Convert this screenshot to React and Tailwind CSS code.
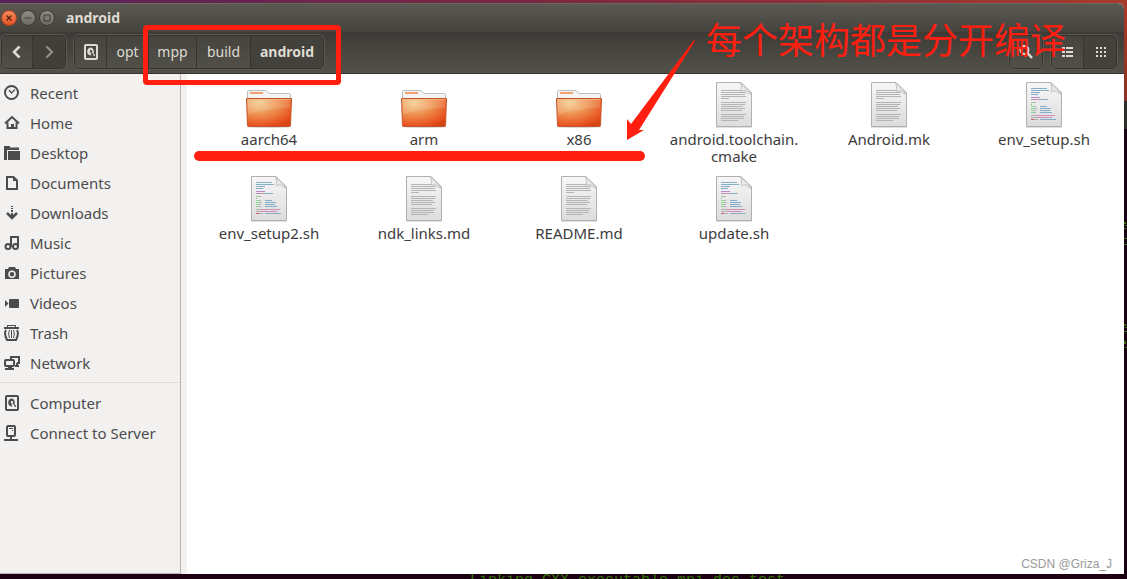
const DISK = (
  <>
    <rect x="2" y="1" width="12" height="14" rx="1" fill="none" stroke="currentColor" strokeWidth="2" />
    <path
      fillRule="evenodd"
      d="M8 3.500a4 4 0 00-1 7.800l1.500.2L7.500 9 9 8.500l2 3.500h1v-1L10.500 9A4 4 0 008 3.500zM8 6a1.200 1.200 0 110 2.400A1.200 1.200 0 018 6z"
    />
  </>
);

const ICONS = {
  recent: (
    <>
      <circle cx="7.5" cy="7.5" r="6.5" fill="none" stroke="currentColor" strokeWidth="2" />
      <path d="M5 5l2.5 3L11 4.5" fill="none" stroke="currentColor" strokeWidth="1.2" />
    </>
  ),
  home: (
    <>
      <path d="M1 8.500L8 2l7 6.500" fill="none" stroke="currentColor" strokeWidth="2" />
      <path d="M3.500 7.500V13h9V7.500" fill="none" stroke="currentColor" strokeWidth="2" />
      <path d="M7 9h3v5H7z" />
    </>
  ),
  desktop: (
    <>
      <path d="M0 1h6v1.500h9V5H3v10H0z" />
      <path d="M4 6h12v9H4z" />
      <path d="M1.500 4.500V15" stroke="currentColor" strokeWidth="3" />
    </>
  ),
  documents: (
    <>
      <path d="M3 2h6.500L13 5.500V14H3z" fill="none" stroke="currentColor" strokeWidth="2" />
      <path d="M9 1l5 5H9z" />
    </>
  ),
  downloads: (
    <>
      <path d="M7 1h2v1H7zM7 3h2v1H7zM7 5h2v2H7zM7 8h2v4H7z" />
      <path d="M3 8l5 5 5-5" fill="none" stroke="currentColor" strokeWidth="2.500" />
    </>
  ),
  music: (
    <>
      <path d="M6 1h9v11h-2V3H8v9H6z" />
      <circle cx="4" cy="11.500" r="2.500" fill="none" stroke="currentColor" strokeWidth="2" />
      <circle cx="11.500" cy="11.500" r="2.500" fill="none" stroke="currentColor" strokeWidth="2" />
    </>
  ),
  pictures: (
    <path
      fillRule="evenodd"
      d="M5 2h6l1 2h3v10H1V4h3zM8 5.500a3.800 3.800 0 100 7.600 3.800 3.800 0 000-7.600zM8 7a2.300 2.300 0 110 4.600A2.300 2.300 0 018 7z"
    />
  ),
  videos: (
    <>
      <rect x="5" y="4" width="10" height="9" rx="1" />
      <path d="M1 5l3.500 3.500L1 12z" />
    </>
  ),
  trash: (
    <>
      <path d="M3 0h9v2h3v2H0V2h3z" />
      <path d="M2 5C0 8 1.500 12 3 15h9c1.500-3 3-7 1-10" fill="none" stroke="currentColor" strokeWidth="2" />
      <path d="M5.500 5c-1 3-1 5 0 8M7.500 5v8M9.500 5c1 3 1 5 0 8" fill="none" stroke="currentColor" />
      <path d="M4 1.500h7" stroke="#f2f1f0" />
    </>
  ),
  network: (
    <>
      <path d="M7 4V2h8v6h-2" fill="none" stroke="currentColor" strokeWidth="2" />
      <rect x="1" y="5" width="9" height="6" rx="1" fill="none" stroke="currentColor" strokeWidth="2" />
      <path d="M4 12h4v1h2v2H1v-2h3zM12 8h2v2h1v2h-4v-2h1z" />
    </>
  ),
  computer: DISK,
  server: (
    <>
      <rect x="3" y="1" width="8" height="10" rx="1" fill="none" stroke="currentColor" strokeWidth="2" />
      <path d="M5 3h4v1H5zM8 5h1v1H8zM6 11h2v3H6zM0 14h14v2H0z" />
    </>
  ),
};

const PLACES = [
  ["recent", "Recent"],
  ["home", "Home"],
  ["desktop", "Desktop"],
  ["documents", "Documents"],
  ["downloads", "Downloads"],
  ["music", "Music"],
  ["pictures", "Pictures"],
  ["videos", "Videos"],
  ["trash", "Trash"],
  ["network", "Network"],
];

const DEVICES = [
  ["computer", "Computer"],
  ["server", "Connect to Server"],
];

const FILES = [
  { name: "aarch64", type: "folder" },
  { name: "arm", type: "folder" },
  { name: "x86", type: "folder" },
  { name: "android.toolchain.cmake", type: "text" },
  { name: "Android.mk", type: "text" },
  { name: "env_setup.sh", type: "script" },
  { name: "env_setup2.sh", type: "script" },
  { name: "ndk_links.md", type: "text" },
  { name: "README.md", type: "text" },
  { name: "update.sh", type: "script" },
];

// [y, width]
const TEXT_LINES = [
  [10, 25], [12, 25], [14, 24], [16, 25], [18, 8],
  [22, 25], [24, 24], [26, 22], [28, 24], [30, 21],
  [34, 25], [36, 23], [38, 23], [40, 17],
];

// [x, y, width, colour]
const CODE_LINES = [
  [11, 8, 16, "#86aec8"], [11, 10, 18, "#86aec8"], [11, 12, 9, "#86aec8"], [11, 14, 7, "#86aec8"],
  [11, 17, 9, "#b58ccb"], [11, 19, 3, "#b58ccb"], [14, 19, 5, "#d08fb5"], [19, 19, 9, "#86aec8"],
  [11, 22, 3, "#8fd68f"], [14, 22, 2, "#b0b0b0"], [11, 24, 1, "#a0a0a0"],
  [11, 26, 4, "#8fd68f"], [15, 26, 1, "#b0b0b0"], [20, 26, 7, "#86aec8"],
  [11, 28, 3, "#8fd68f"], [14, 28, 3, "#b0b0b0"], [20, 28, 11, "#86aec8"],
  [11, 30, 3, "#8fd68f"], [14, 30, 2, "#b0b0b0"], [20, 30, 10, "#86aec8"],
  [11, 32, 3, "#8fd68f"], [14, 32, 2, "#b0b0b0"], [20, 32, 12, "#86aec8"],
  [11, 35, 5, "#b0b0b0"], [16, 35, 19, "#d08fb5"],
  [11, 37, 6, "#b0b0b0"], [17, 37, 15, "#d08fb5"],
  [11, 39, 3, "#d05868"], [14, 39, 4, "#b0b0b0"], [20, 39, 16, "#86aec8"],
];

function Icon({ name }) {
  return (
    <svg viewBox="0 0 16 16" className="size-4 shrink-0" fill="currentColor" aria-hidden="true">
      {ICONS[name]}
    </svg>
  );
}

function FolderIcon() {
  return (
    <svg viewBox="0 0 48 48" className="size-12" aria-hidden="true">
      <defs>
        <radialGradient id="folder" cx="0.28" cy="0.15" r="0.95">
          <stop offset="0" stopColor="#f5cd90" />
          <stop offset="0.450" stopColor="#ed9150" />
          <stop offset="0.850" stopColor="#e95420" />
          <stop offset="1" stopColor="#d64516" />
        </radialGradient>
      </defs>
      <ellipse cx="24" cy="47" rx="22" ry="1" fill="#000" opacity="0.15" />
      <path d="M2.500 30V11.500q0-1 1-1h17q1 0 2 1.500t2.500 1.500h19.500q1 0 1 1V30z" fill="#f4f4f2" stroke="#bcbcba" />
      <path d="M5 12h13v2H5z" fill="#f0a070" />
      <path d="M1.500 18.500h45l-1 27q0 1-1 1h-41q-1 0-1-1z" fill="url(#folder)" stroke="#c5542a" />
      <path d="M2.500 19.500h43l-.5 8C30 29 16 30 3 34.500z" fill="#fff" opacity="0.13" />
      <path d="M2.500 19.500h43" stroke="#f7bd8c" opacity="0.7" />
    </svg>
  );
}

function FileIcon({ script }) {
  return (
    <svg viewBox="0 0 48 48" className="size-12" aria-hidden="true">
      <defs>
        <linearGradient id="paper" x1="0" y1="0" x2="0" y2="1">
          <stop offset="0" stopColor="#f7f7f7" />
          <stop offset="1" stopColor="#dcdcdc" />
        </linearGradient>
        <linearGradient id="fold" x1="0" y1="1" x2="1" y2="0">
          <stop offset="0" stopColor="#fff" />
          <stop offset="0.500" stopColor="#e0e0e0" />
          <stop offset="1" stopColor="#b5b5b5" />
        </linearGradient>
      </defs>
      <path d="M6 47.500h36" stroke="#000" opacity="0.12" />
      <path d="M6.500 2.500H31L41.500 13v33.500h-35z" fill="url(#paper)" stroke="#b0b0b0" />
      {script
        ? CODE_LINES.map(([x, y, width, fill]) => (
            <rect key={`${x}-${y}`} x={x} y={y} width={width} height="1" fill={fill} />
          ))
        : TEXT_LINES.map(([y, width]) => (
            <rect key={y} x="11" y={y} width={width} height="1" fill="#b4b4b4" />
          ))}
      <path d="M30 4v7q0 2 2 2h9v2q-6-3-11-2z" fill="#999" opacity="0.35" />
      <path d="M30.500 2.500q2 5 .5 8.500 5-1 10.500 2z" fill="url(#fold)" stroke="#b4b4b4" strokeWidth="0.800" />
    </svg>
  );
}

function WindowButton({ label, close, children }) {
  return (
    <button
      aria-label={label}
      className={`flex size-4 items-center justify-center rounded-full border ${
        close
          ? "border-[#a6401c] bg-linear-to-b from-[#f58a5e] to-[#e3521f] text-[#5a2410]"
          : "border-[#3a3934] bg-linear-to-b from-[#8e8c84] to-[#6b6a62] text-[#3c3b37]"
      }`}
    >
      <svg viewBox="0 0 14 14" className="size-3.5 shrink-0" fill="none" stroke="currentColor">
        {children}
      </svg>
    </button>
  );
}

function SidebarList({ items }) {
  return (
    <ul>
      {items.map(([icon, label]) => (
        <li key={icon}>
          <a href="#" className="flex h-[30px] items-center gap-2.5 pl-1">
            <Icon name={icon} />
            <span>{label}</span>
          </a>
        </li>
      ))}
    </ul>
  );
}

function Toolbar() {
  const group = "flex h-[34px] overflow-hidden rounded-[5px] border border-[#35342f] shadow-[0_0_0_1px_#59584f]";
  const raised = "bg-linear-to-b from-[#45443f] to-[#504f48]";
  const crumb = `flex items-center justify-center border-r border-[#35342f] ${raised}`;

  return (
    <div className="flex h-[42px] items-start border-b border-[#35342f] bg-linear-to-b from-[#3c3b37] to-[#525149] pt-[3px] pl-px text-sm text-[#dfdbd2]">
      <div className={group}>
        <button aria-label="Back" className={`${crumb} w-[31px]`}>
          <svg viewBox="0 0 16 16" className="size-4" fill="none" stroke="currentColor" strokeWidth="2.500">
            <path d="M10.500 2.500L5 8l5.500 5.500" />
          </svg>
        </button>
        <button aria-label="Forward" className="flex w-8 items-center justify-center bg-[#403f3a] text-[#95928b]">
          <svg viewBox="0 0 16 16" className="size-4" fill="none" stroke="currentColor" strokeWidth="2">
            <path d="M5.500 2.500L11 8l-5.500 5.500" />
          </svg>
        </button>
      </div>
      <nav className={`${group} ml-2`} aria-label="Path">
        <button aria-label="File system" className={`${crumb} w-8`}>
          <svg viewBox="0 0 16 16" className="size-4" fill="currentColor">
            {DISK}
          </svg>
        </button>
        <button className={`${crumb} w-[42px]`}>opt</button>
        <button className={`${crumb} w-12`}>mpp</button>
        <button className={`${crumb} w-[54px]`}>build</button>
        <button className="flex w-[72px] items-center justify-center bg-[#42413c] font-bold">android</button>
      </nav>
      <div className={`${group} mr-2 ml-auto`}>
        <button aria-label="Search" className={`flex w-8 items-center justify-center ${raised}`}>
          <svg viewBox="0 0 16 16" className="size-4" fill="none" stroke="currentColor" strokeWidth="2">
            <circle cx="6.500" cy="6" r="4" />
            <path d="M9.500 9l4.500 5" strokeWidth="2.500" />
          </svg>
        </button>
      </div>
      <div className={`${group} mr-[7px]`}>
        <button aria-label="List view" className={`${crumb} w-8`}>
          <svg viewBox="0 0 16 16" className="size-4" fill="currentColor">
            <path d="M2 3h3v2H2zM6 3h7v2H6zM2 7h3v2H2zM6 7h7v2H6zM2 11h3v2H2zM6 11h7v2H6z" />
          </svg>
        </button>
        <button aria-label="Icon view" className="flex w-8 items-center justify-center bg-[#42413c]">
          <svg viewBox="0 0 16 16" className="size-4" fill="currentColor">
            <path d="M4 3h2v2H4zM8 3h2v2H8zM12 3h2v2h-2zM4 7h2v2H4zM8 7h2v2H8zM12 7h2v2h-2zM4 11h2v2H4zM8 11h2v2H8zM12 11h2v2h-2z" />
          </svg>
        </button>
      </div>
    </div>
  );
}

function Annotations() {
  return (
    <div className="pointer-events-none absolute inset-0 text-[#ff1e10]">
      <div className="absolute top-[25px] left-[143px] h-[60px] w-[198px] rounded-[4px] border-5 border-current" />
      <div className="absolute top-[151px] left-[194px] h-2.5 w-[451px] rounded-full bg-current" />
      <svg viewBox="0 0 72 104" className="absolute top-[38px] left-[624px] h-[104px] w-[72px]" fill="currentColor">
        <path d="M70 2L71 3L15 92L20 92L3 102L3 81L7 86z" />
      </svg>
      <p className="absolute top-[18px] left-[706px] font-['Noto_Sans_CJK_SC',sans-serif] text-[36px] leading-[40px] whitespace-nowrap">
        每个架构都是分开编译
      </p>
    </div>
  );
}

function App() {
  return (
    <div className="relative flex h-screen flex-col overflow-hidden bg-[#1a0212] font-['Noto_Sans',sans-serif] text-[15px] text-[#3c3c3c]">
      <div className="absolute inset-x-0 top-0 h-2.5 bg-linear-to-r from-[#58205a] via-[#7c2840] to-[#a83a2c]" />
      <div className="absolute top-0 right-0 h-[101px] w-2 bg-linear-to-b from-[#a83a2c] to-[#8c2f24]" />
      <div className="absolute top-[101px] right-0 h-7 w-2 bg-[#2d2f2a]" />
      <svg viewBox="0 0 3 130" className="absolute top-[220px] right-0 h-[130px] w-[3px]" fill="#347008">
        <path d="M0 2h2v2H0zM1 5h2v1H1zM0 8h2v1H0zM0 18h3v1H0zM0 24h3v1H0zM0 104h2v2H0zM1 107h2v1H1zM0 111h3v1H0zM0 121h2v3H0zM1 127h2v1H1z" />
      </svg>

      <div className="relative mt-[3px] mr-[3px] flex min-h-0 flex-1 flex-col overflow-hidden rounded-tr-md bg-white">
        <header>
          <div className="flex h-[29px] items-center gap-[3px] border-t border-[#6b685f] bg-linear-to-b from-[#5b5952] to-[#44433e] pl-px">
            <WindowButton label="Close" close>
              <path d="M4.500 4.500l5 5M9.500 4.500l-5 5" strokeWidth="1.300" />
            </WindowButton>
            <WindowButton label="Minimize">
              <path d="M3.500 7h7" />
            </WindowButton>
            <WindowButton label="Maximize">
              <path d="M4 4h6v6H4z" />
            </WindowButton>
            <h1 className="ml-2 text-sm font-bold text-[#dfdbd2]">android</h1>
          </div>
          <Toolbar />
        </header>

        <div className="flex min-h-0 flex-1">
          <aside className="w-[181px] shrink-0 border-r border-b border-[#b9b7ad] bg-[#f2f1f0] pt-1 text-[#4c4c4c]">
            <SidebarList items={PLACES} />
            <hr className="mt-1 mb-[5px] border-[#dcdad7]" />
            <SidebarList items={DEVICES} />
          </aside>
          <div className="w-1.5 shrink-0 bg-[#f2f1f0]" />
          <main className="min-w-0 flex-1">
            <ul className="grid grid-cols-[repeat(auto-fill,154px)] gap-x-px gap-y-[9px] pt-1.5 pl-[5px]">
              {FILES.map((file) => (
                <li key={file.name} className="flex justify-center">
                  <button className="flex w-[136px] flex-col items-center gap-[3px]">
                    {file.type === "folder" ? <FolderIcon /> : <FileIcon script={file.type === "script"} />}
                    <span className="text-center leading-[17px]">
                      {file.name === "android.toolchain.cmake" ? (
                        <>
                          android.toolchain.
                          <br />
                          cmake
                        </>
                      ) : (
                        file.name
                      )}
                    </span>
                  </button>
                </li>
              ))}
            </ul>
          </main>
        </div>
        <p className="absolute right-3 bottom-0.5 font-['Liberation_Sans',sans-serif] text-xs leading-4 text-[#999]">
          CSDN @Griza_J
        </p>
      </div>

      <div className="h-[5px] shrink-0 overflow-hidden pl-[470px] font-['Liberation_Mono',monospace] text-[15px] leading-[14px] whitespace-nowrap text-[#347008]">
        Linking CXX executable mpi_dec_test
      </div>
      <Annotations />
    </div>
  );
}

export default App;
